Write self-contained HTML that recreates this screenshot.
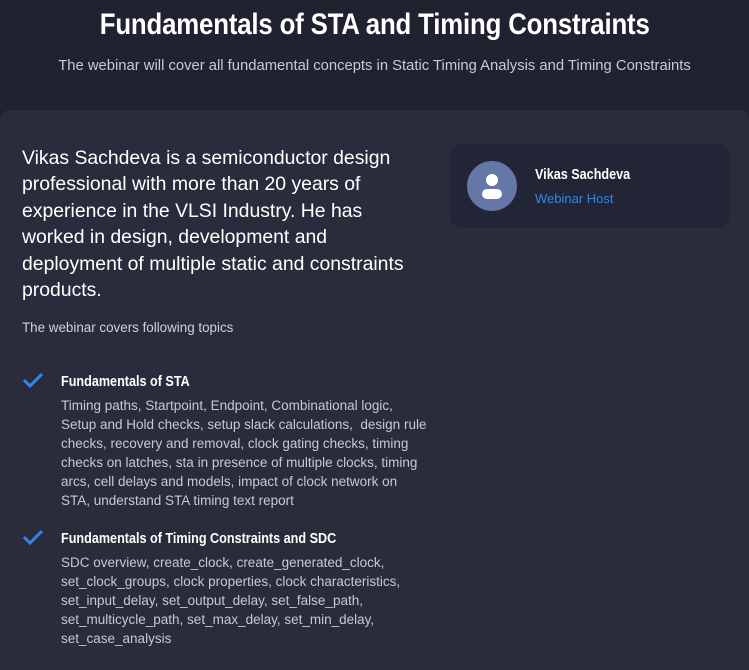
<!DOCTYPE html>
<html><head><meta charset="utf-8"><style>
*{margin:0;padding:0;box-sizing:border-box}
body{width:749px;height:657px;overflow:hidden;background:#212230;font-family:"Liberation Sans",sans-serif;position:relative;color:#fff}
.cond{display:inline-block;transform:scaleX(0.87);transform-origin:left center;white-space:nowrap}
h1{position:absolute;top:8px;left:0;width:749px;text-align:center;font-size:30px;font-weight:bold;letter-spacing:-0.2px}
h1 span{display:inline-block;transform:scaleX(0.86);white-space:nowrap}
.sub{position:absolute;top:58px;left:0;width:749px;text-align:center;font-size:14.8px;color:#c9cad2}
.panel{position:absolute;top:110px;left:0;width:749px;height:560px;background:#2a2c3b;border-radius:10px 10px 0 0}
.intro{position:absolute;left:22px;top:145px;width:396px;font-size:19.4px;line-height:26.4px;color:#fff}
.topics{position:absolute;left:22px;top:320px;font-size:13.4px;color:#d0d1d8}
.item{position:absolute;left:22px}
.item svg{position:absolute;left:0;top:0}
.item h3{position:absolute;left:39px;top:2px;font-size:14.5px;font-weight:bold}
.item p{position:absolute;left:39px;top:24px;width:368px;font-size:13.5px;line-height:19px;color:#c8c9d0}
.card{position:absolute;left:450px;top:144px;width:280px;height:84px;background:#222536;border-radius:12px}
.av{position:absolute;left:17px;top:17px;width:50px;height:50px;border-radius:50%;background:#6477a6}
.name{position:absolute;left:85px;top:23px;font-size:14.5px;font-weight:bold}
.host{position:absolute;left:85px;top:47px;font-size:13px;color:#2f86f0}
</style></head><body>
<h1><span>Fundamentals of STA and Timing Constraints</span></h1>
<div class="sub">The webinar will cover all fundamental concepts in Static Timing Analysis and Timing Constraints</div>
<div class="panel"></div>
<div class="intro">Vikas Sachdeva is a semiconductor design professional with more than 20 years of experience in the VLSI Industry. He has worked in design, development and deployment of multiple static and constraints products.</div>
<div class="topics">The webinar covers following topics</div>
<div class="item" style="top:372px">
<svg width="22" height="16" viewBox="0 0 22 16"><path d="M2 8 L8 14 L20 2" fill="none" stroke="#2f86f0" stroke-width="3"/></svg>
<h3 class="cond">Fundamentals of STA</h3>
<p>Timing paths, Startpoint, Endpoint, Combinational logic, Setup and Hold checks, setup slack calculations,&nbsp; design rule checks, recovery and removal, clock gating checks, timing checks on latches, sta in presence of multiple clocks, timing arcs, cell delays and models, impact of clock network on STA, understand STA timing text report</p>
</div>
<div class="item" style="top:529px">
<svg width="22" height="16" viewBox="0 0 22 16"><path d="M2 8 L8 14 L20 2" fill="none" stroke="#2f86f0" stroke-width="3"/></svg>
<h3 class="cond">Fundamentals of Timing Constraints and SDC</h3>
<p>SDC overview, create_clock, create_generated_clock, set_clock_groups, clock properties, clock characteristics, set_input_delay, set_output_delay, set_false_path, set_multicycle_path, set_max_delay, set_min_delay, set_case_analysis</p>
</div>
<div class="card">
<div class="av"><svg width="50" height="50" viewBox="0 0 50 50"><circle cx="25" cy="19" r="6" fill="#fff"/><rect x="15" y="28" width="20" height="10" rx="5" fill="#fff"/></svg></div>
<div class="name cond">Vikas Sachdeva</div>
<div class="host">Webinar Host</div>
</div>
</body></html>
